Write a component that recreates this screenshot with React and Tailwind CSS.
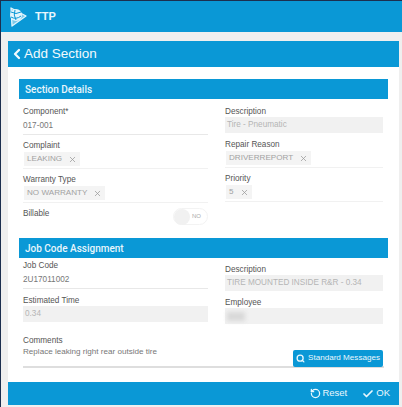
import React from 'react';
import { ChevronLeft, X, Search, RotateCcw, Check } from 'lucide-react';

const Label = ({ children }) => (
  <div className="text-[8.2px] leading-[12px] text-[#555]">{children}</div>
);

const Chip = ({ text }) => (
  <div className="flex h-[14px] items-center gap-[6px] bg-[#f4f4f4] px-[3px] text-[8.1px] text-[#a2a2a2]">
    <span>{text}</span>
    <X size={9} strokeWidth={2} className="text-[#999]" />
  </div>
);

const ChipField = ({ label, text }) => (
  <div className="h-[34px]">
    <Label>{label}</Label>
    <div className="flex h-[17px] items-start border-b border-[#f1f1f1] pl-[1px]">
      <Chip text={text} />
    </div>
  </div>
);

const ReadOnly = ({ label, text, blur }) => (
  <div className="h-[33px]">
    <Label>{label}</Label>
    <div className="mt-[-1px] flex h-[16px] items-center bg-[#f1f1f1] px-[2px] text-[8.2px] text-[#b5b5b5]">
      {blur ? <span className="h-[9px] w-[18px] bg-[#d8d8d8] blur-[2px]" /> : text}
    </div>
  </div>
);

const SectionHeader = ({ children }) => (
  <div className="flex h-[20px] items-center bg-[#0a98d6] pl-[6px] font-['Roboto',sans-serif] text-[10px] font-medium text-[#e8f6fc]">
    {children}
  </div>
);

export default function App() {
  return (
    <div className="flex h-[407px] w-[402px] flex-col overflow-hidden border-l border-t border-[#1c2f4f] bg-[#efefef] font-['Liberation_Sans',sans-serif]">
      {/* Barra superior */}
      <div className="flex h-[31px] shrink-0 items-center gap-[7px] bg-[#0a98d6] pl-[7px]">
        <svg width="20" height="21" viewBox="0 0 20 21" fill="none" stroke="#e3f5fc" strokeWidth="1.3">
          <path d="M3 2 L18 10 L4 20 Z" strokeLinejoin="round" fill="#7cc9ea" />
          <circle cx="8" cy="9" r="6" fill="#e3f5fc" stroke="none" />
          <path d="M3 6 Q8 9 13 6 M3 11 Q8 14 13 10 M7 4 Q5 9 8 14" stroke="#0a98d6" strokeWidth="1" />
        </svg>
        <span className="text-[11px] font-bold text-[#eaf7fd]">TTP</span>
      </div>

      <div className="flex min-h-0 flex-1 flex-col pb-[2px] pl-[7px] pr-[3px] pt-[9px]">
        {/* Titulo */}
        <div className="flex h-[26px] shrink-0 items-center bg-[#0a98d6] pl-[1px] text-[#f2fafd]">
          <ChevronLeft size={16} strokeWidth={3.4} />
          <span className="-ml-[1px] text-[13.5px] leading-none">Add Section</span>
        </div>

        <div className="flex flex-1 flex-col bg-white">
          <div className="flex-1 pl-[11px] pr-[11px] pt-[12px]">
            <SectionHeader>Section Details</SectionHeader>

            <div className="grid grid-cols-[185px_158px] gap-x-[17px] px-[4px] pt-[7px]">
              <div>
                <div className="h-[34px]">
                  <Label>Component*</Label>
                  <div className="flex h-[17px] items-center border-b border-[#e8e8e8] text-[8.2px] text-[#777]">017-001</div>
                </div>
                <ChipField label="Complaint" text="LEAKING" />
                <ChipField label="Warranty Type" text="NO WARRANTY" />
                <div className="flex h-[22px] justify-between">
                  <Label>Billable</Label>
                  <div className="flex h-[17px] w-[35px] items-center rounded-full border border-[#f3f3f3] bg-white">
                    <div className="h-[16px] w-[16px] rounded-full bg-[#f1f1f1]" />
                    <span className="ml-[2px] text-[6px] text-[#aaa]">NO</span>
                  </div>
                </div>
              </div>
              <div>
                <ReadOnly label="Description" text="Tire - Pneumatic" />
                <ChipField label="Repair Reason" text="DRIVERREPORT" />
                <ChipField label="Priority" text="5" />
              </div>
            </div>

            <div className="mt-[8px]">
              <SectionHeader>Job Code Assignment</SectionHeader>
            </div>

            <div className="grid grid-cols-[185px_158px] gap-x-[17px] px-[4px] pt-[2px]">
              <div>
                <div className="h-[35px]">
                  <Label>Job Code</Label>
                  <div className="flex h-[17px] items-center border-b border-[#e8e8e8] text-[8.2px] text-[#777]">2U17011002</div>
                </div>
                <ReadOnly label="Estimated Time" text="0.34" />
              </div>
              <div className="pt-[4px]">
                <ReadOnly label="Description" text="TIRE MOUNTED INSIDE R&R - 0.34" />
                <ReadOnly label="Employee" blur />
              </div>
            </div>

            <div className="relative mx-[4px] mt-[5px] h-[33px] border-b-2 border-[#dedede]">
              <Label>Comments</Label>
              <div className="-mt-[1px] text-[8.1px] leading-[12px] text-[#777]">Replace leaking right rear outside tire</div>
              <button className="absolute bottom-[-1px] right-[1px] flex h-[17px] w-[90px] items-center justify-center gap-[3px] whitespace-nowrap rounded-[2px] bg-[#0a98d6] text-[8.1px] text-[#eaf7fd]">
                <Search size={9} strokeWidth={3.5} />
                Standard Messages
              </button>
            </div>
          </div>

          {/* Pie con acciones */}
          <div className="flex h-[23px] shrink-0 items-center justify-end gap-[15px] bg-[#0a98d6] pr-[9px] text-[9.5px] text-[#eaf7fd]">
            <span className="flex items-center gap-[1px]">
              <RotateCcw size={11} strokeWidth={2.8} />
              Reset
            </span>
            <span className="flex items-center gap-[2px]">
              <Check size={12} strokeWidth={3.5} />
              OK
            </span>
          </div>
        </div>
      </div>
    </div>
  );
}
